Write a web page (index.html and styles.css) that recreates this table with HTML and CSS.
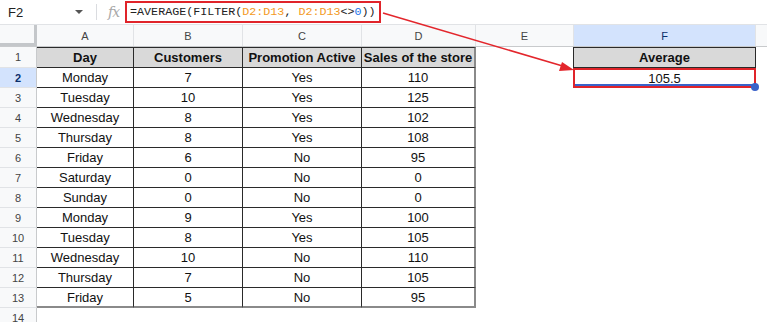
FILE: index.html
```html
<!DOCTYPE html>
<html>
<head>
<meta charset="utf-8">
<link rel="stylesheet" href="styles.css">
</head>
<body>
<div class="sheet">
  <div class="fbar">
    <div class="namebox">F2</div>
    <div class="caret"></div>
    <div class="divider"></div>
    <div class="fx">fx</div>
    <div class="formula"><span class="ftext">=AVERAGE(FILTER(<span class="ref">D2:D13</span>, <span class="ref">D2:D13</span>&lt;&gt;<span class="num">0</span>))</span></div>
  </div>

  <div class="row colhdr">
    <div class="corner"></div>
    <div class="ch">A</div><div class="ch">B</div><div class="ch">C</div><div class="ch">D</div><div class="ch">E</div><div class="ch sel">F</div><div class="ch last"></div>
  </div>

  <div class="row r1">
    <div class="rh">1</div>
    <div class="c th">Day</div><div class="c th">Customers</div><div class="c th">Promotion Active</div><div class="c th edge">Sales of the store</div>
    <div class="e"></div><div class="c th fcol">Average</div><div class="e"></div>
  </div>
  <div class="row">
    <div class="rh selrow">2</div>
    <div class="c">Monday</div><div class="c">7</div><div class="c">Yes</div><div class="c edge">110</div>
    <div class="e"></div><div class="c fcol fsel">105.5</div><div class="e"></div>
  </div>
  <div class="row"><div class="rh">3</div><div class="c">Tuesday</div><div class="c">10</div><div class="c">Yes</div><div class="c edge">125</div><div class="e"></div><div class="e"></div><div class="e"></div></div>
  <div class="row"><div class="rh">4</div><div class="c">Wednesday</div><div class="c">8</div><div class="c">Yes</div><div class="c edge">102</div><div class="e"></div><div class="e"></div><div class="e"></div></div>
  <div class="row"><div class="rh">5</div><div class="c">Thursday</div><div class="c">8</div><div class="c">Yes</div><div class="c edge">108</div><div class="e"></div><div class="e"></div><div class="e"></div></div>
  <div class="row"><div class="rh">6</div><div class="c">Friday</div><div class="c">6</div><div class="c">No</div><div class="c edge">95</div><div class="e"></div><div class="e"></div><div class="e"></div></div>
  <div class="row"><div class="rh">7</div><div class="c">Saturday</div><div class="c">0</div><div class="c">No</div><div class="c edge">0</div><div class="e"></div><div class="e"></div><div class="e"></div></div>
  <div class="row"><div class="rh">8</div><div class="c">Sunday</div><div class="c">0</div><div class="c">No</div><div class="c edge">0</div><div class="e"></div><div class="e"></div><div class="e"></div></div>
  <div class="row"><div class="rh">9</div><div class="c">Monday</div><div class="c">9</div><div class="c">Yes</div><div class="c edge">100</div><div class="e"></div><div class="e"></div><div class="e"></div></div>
  <div class="row"><div class="rh">10</div><div class="c">Tuesday</div><div class="c">8</div><div class="c">Yes</div><div class="c edge">105</div><div class="e"></div><div class="e"></div><div class="e"></div></div>
  <div class="row"><div class="rh">11</div><div class="c">Wednesday</div><div class="c">10</div><div class="c">No</div><div class="c edge">110</div><div class="e"></div><div class="e"></div><div class="e"></div></div>
  <div class="row"><div class="rh">12</div><div class="c">Thursday</div><div class="c">7</div><div class="c">No</div><div class="c edge">105</div><div class="e"></div><div class="e"></div><div class="e"></div></div>
  <div class="row lastrow"><div class="rh">13</div><div class="c">Friday</div><div class="c">5</div><div class="c">No</div><div class="c edge">95</div><div class="e"></div><div class="e"></div><div class="e"></div></div>
  <div class="row"><div class="rh">14</div><div class="e"></div><div class="e"></div><div class="e"></div><div class="e"></div><div class="e"></div><div class="e"></div><div class="e"></div></div>

  <svg class="arrow" width="767" height="322" viewBox="0 0 767 322">
    <line x1="383" y1="13" x2="566" y2="67" stroke="#e3262c" stroke-width="1.6"/>
    <polygon points="574,70 562,62 559,71" fill="#e3262c"/>
  </svg>
</div>
</body>
</html>
```

FILE: styles.css
```css
* { box-sizing: border-box; }
html, body { margin: 0; padding: 0; background: #fff; }
body {
  font-family: "Liberation Sans", Arial, sans-serif;
  color: #111;
  overflow: hidden;
}
.sheet {
  position: relative;
  width: 767px;
  height: 322px;
}
.fbar {
  height: 25px;
  display: flex;
  align-items: center;
  border-bottom: 1px solid #e1e3e6;
}
.namebox {
  width: 70px;
  padding-left: 8px;
  font-size: 13px;
  color: #222;
}
.caret {
  width: 0; height: 0;
  border-left: 4px solid transparent;
  border-right: 4px solid transparent;
  border-top: 4px solid #555;
  margin-left: 5px;
}
.divider {
  width: 1px;
  height: 16px;
  background: #dadce0;
  margin-left: 13px;
}
.fx {
  font-family: "DejaVu Serif", serif;
  font-style: italic;
  font-size: 14px;
  color: #a8a8a8;
  margin-left: 11px;
  letter-spacing: -1px;
}
.formula {
  margin-left: 6px;
  height: 22px;
  width: 256px;
  border: 2px solid #e0242a;
  display: flex;
  align-items: center;
  padding-left: 3px;
  font-family: "Liberation Mono", monospace;
  font-size: 11.7px;
  color: #222;
  white-space: pre;
}
.ref { color: #f39a1e; }
.num { color: #1a73e8; }

.row {
  display: grid;
  grid-template-columns: 37px 97px 109px 119px 114px 98px 182px 1fr;
  height: 20px;
}
.colhdr {
  height: 22px;
  border-bottom: 1px solid #c8cacc;
}
.corner {
  background: #f8f9fa;
  border-right: 3px solid #c4c7ca;
  border-bottom: 3px solid #c4c7ca;
}
.ch {
  background: #f8f9fa;
  border-right: 1px solid #e1e3e6;
  font-size: 11px;
  color: #444;
  display: flex;
  align-items: center;
  justify-content: center;
}
.ch.sel { background: #d3e3fd; color: #0b2f6b; }
.ch.last { border-right: none; }

.r1 { height: 21px; }
.rh {
  background: #f8f9fa;
  border-right: 1px solid #c8cacc;
  border-bottom: 1px solid #e1e3e6;
  font-size: 11px;
  color: #444;
  display: flex;
  align-items: center;
  justify-content: center;
}
.rh.selrow { background: #d3e3fd; color: #0b2f6b; font-weight: bold; }

.c {
  border-right: 1px solid #2a2a2a;
  border-bottom: 1px solid #2a2a2a;
  font-size: 13px;
  color: #111;
  display: flex;
  align-items: center;
  justify-content: center;
  white-space: nowrap;
}
.c.edge { border-right: 2px solid #8a8a8a; }
.lastrow .c { border-bottom: 2px solid #8a8a8a; }
.th {
  background: #d9d9d9;
  font-weight: bold;
  border-top: 1px solid #2a2a2a;
}
.fcol { border-left: 1px solid #2a2a2a; margin-left: -1px; }
.fsel {
  position: relative;
  border: 2px solid #e0242a;
  box-shadow: inset 0 -2px 0 #3a62c9;
}
.fsel::after {
  content: "";
  position: absolute;
  right: -5px;
  bottom: -5px;
  width: 8px;
  height: 8px;
  border-radius: 50%;
  background: #3a62c9;
}
.arrow {
  position: absolute;
  left: 0;
  top: 0;
  pointer-events: none;
}
```
